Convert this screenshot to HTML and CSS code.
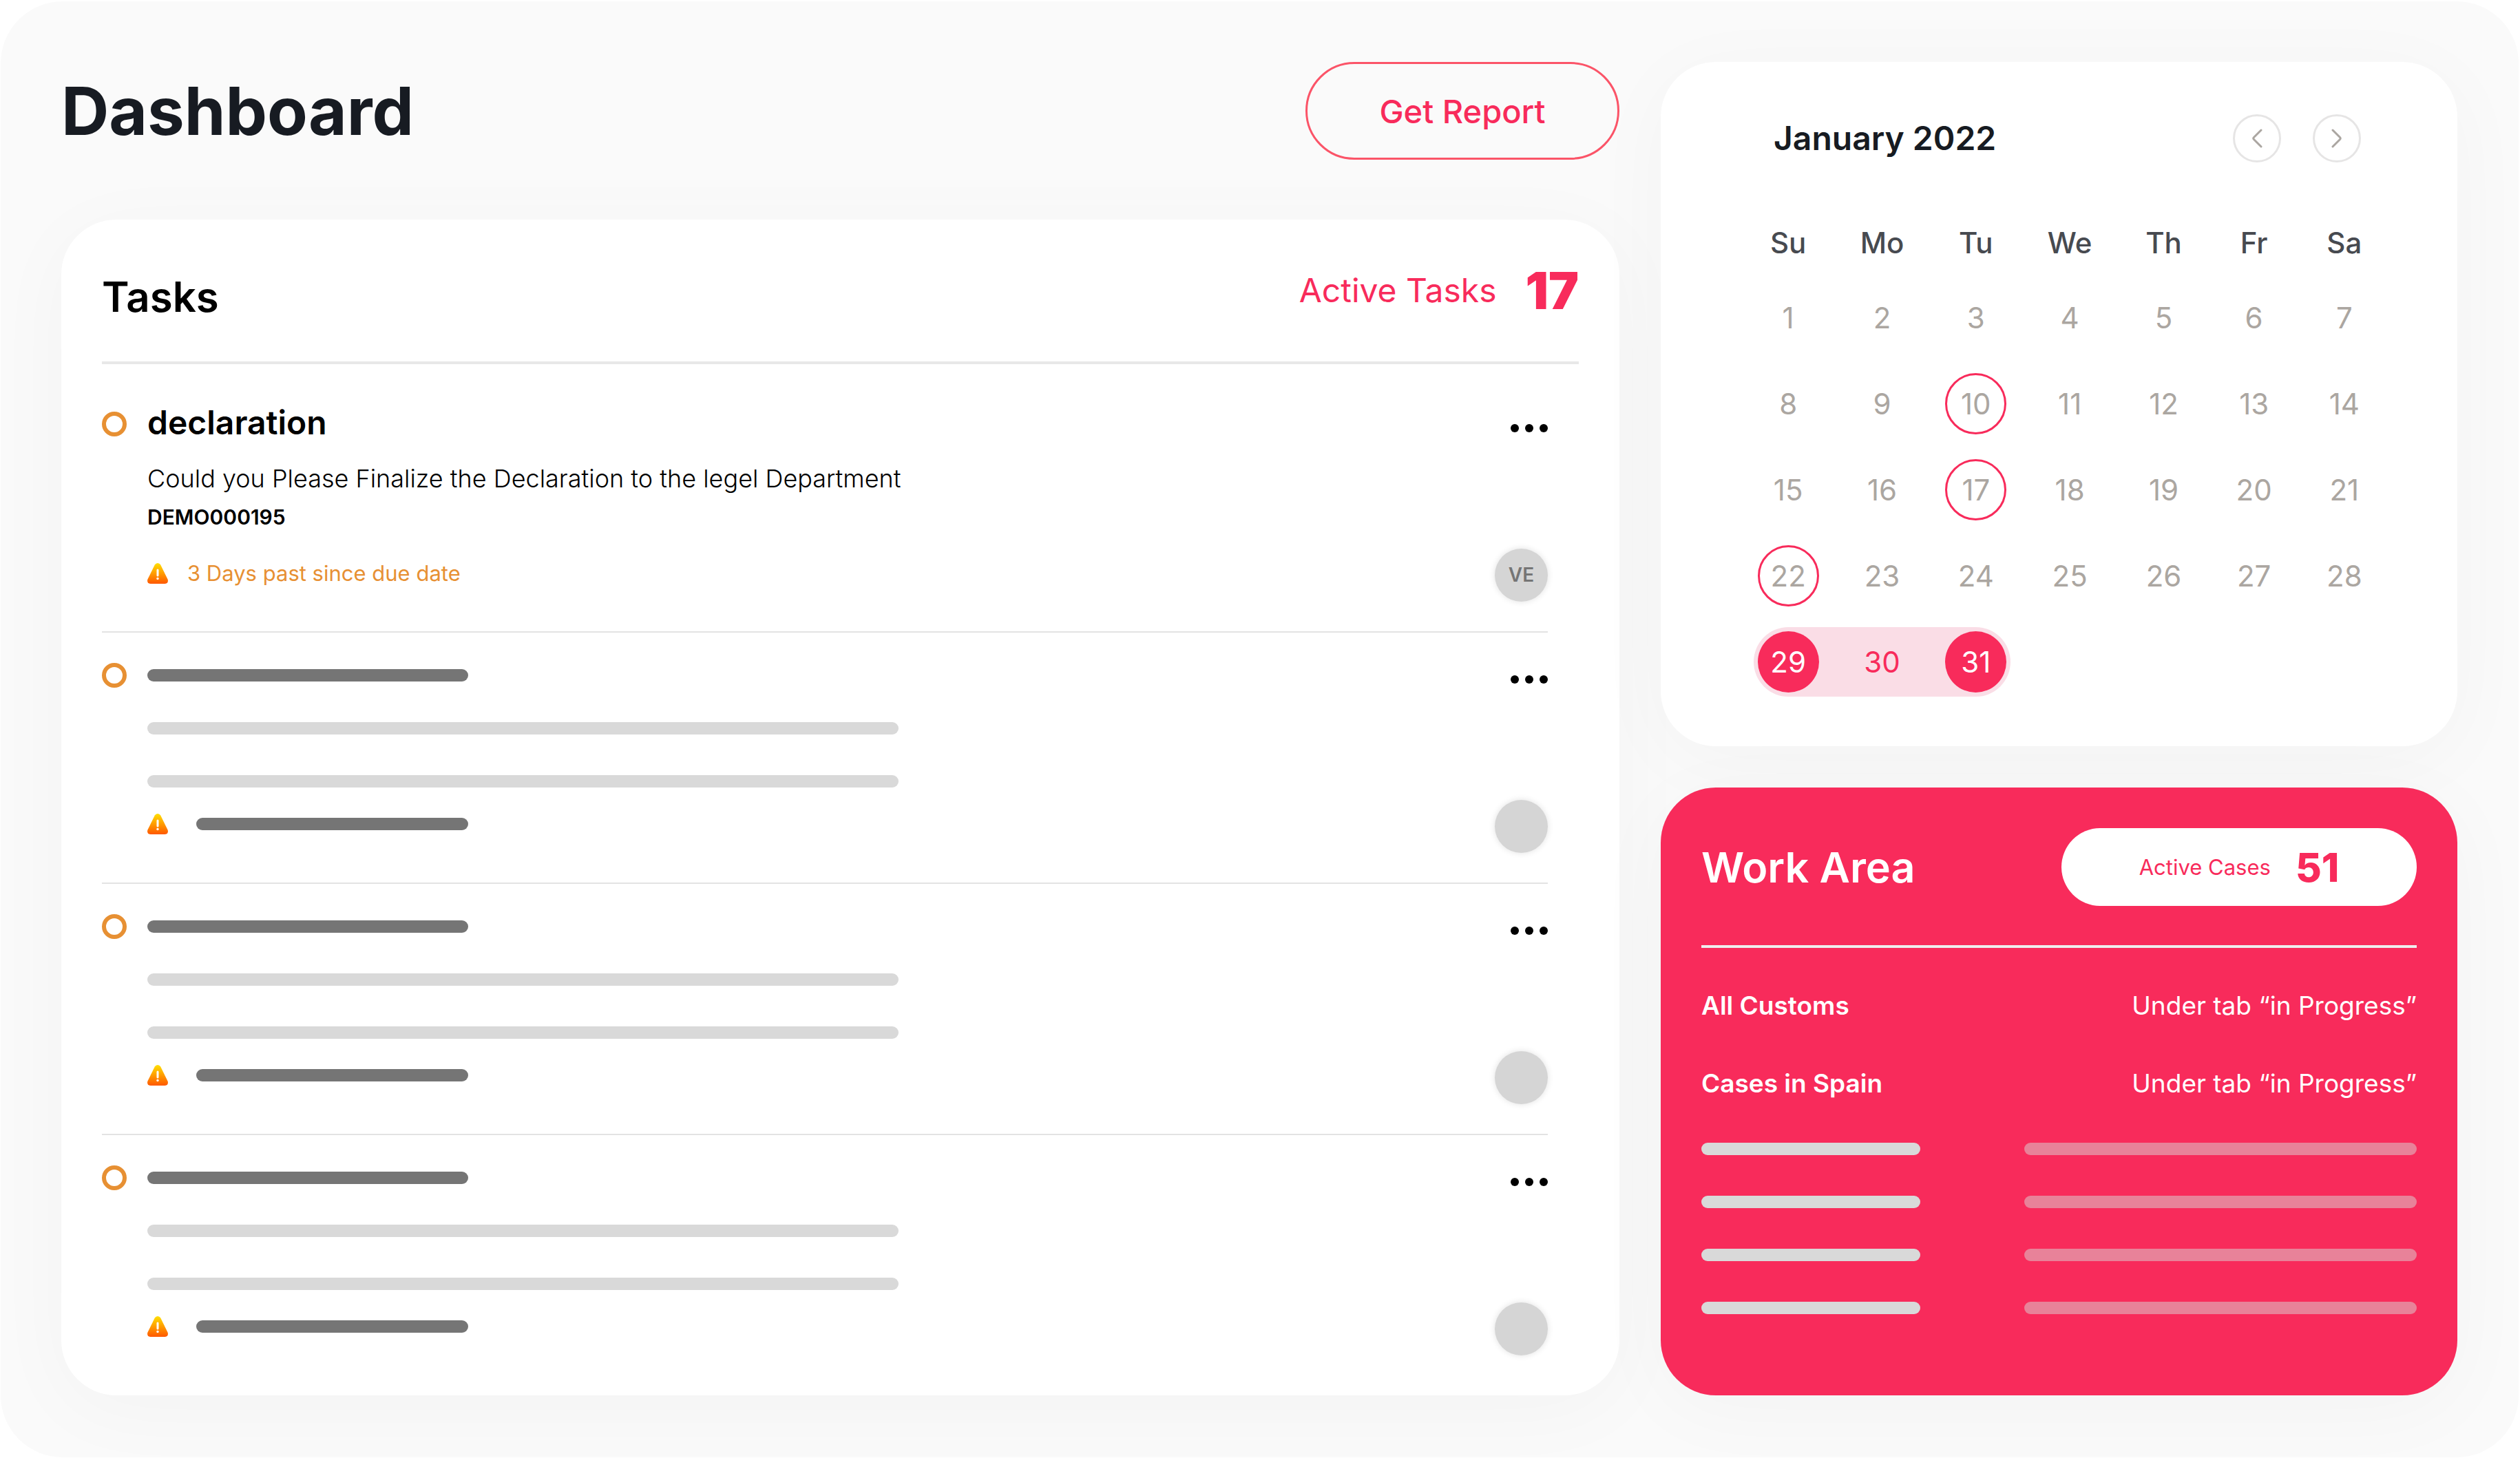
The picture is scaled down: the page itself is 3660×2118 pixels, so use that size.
FILE: index.html
```
<!DOCTYPE html>
<html lang="en">
<head>
  <meta charset="UTF-8">
  <title>Dashboard</title>
  <link rel="stylesheet" href="styles.css">
</head>
<body>
  <svg class="sprite" aria-hidden="true">
    <defs>
      <linearGradient id="warn-fill" x1="0" y1="0" x2="0" y2="1">
        <stop offset="0" stop-color="#ffe000"/>
        <stop offset="1" stop-color="#ff5800"/>
      </linearGradient>
      <symbol id="warn" viewBox="0 0 30 30">
        <path d="M10.800 2.600Q12.200 0 15 0Q17.800 0 19.200 2.600L29.400 23.200Q30.600 26 29.200 28.200Q28 30 25.500 30H4.500Q2 30 .8 28.200Q-.6 26 .6 23.200Z" fill="url(#warn-fill)"/>
        <path d="M15 10V18" stroke="#fff" stroke-width="3" stroke-linecap="round"/>
        <circle cx="15" cy="22.500" r="1.700" fill="#fff"/>
      </symbol>
      <symbol id="dots" viewBox="0 0 54 12">
        <circle cx="6" cy="6" r="6"/>
        <circle cx="27" cy="6" r="6"/>
        <circle cx="48" cy="6" r="6"/>
      </symbol>
    </defs>
  </svg>

  <div class="frame">
    <main class="left">
      <header class="top">
        <h1>Dashboard</h1>
        <button type="button" class="report">Get Report</button>
      </header>

      <section class="card tasks">
        <div class="tasks-head">
          <h2>Tasks</h2>
          <p class="active">Active Tasks <strong>17</strong></p>
        </div>

        <ul class="task-list">
          <li class="task">
            <input type="checkbox" class="ring" aria-label="declaration">
            <div class="task-body">
              <h3>declaration</h3>
              <p class="desc">Could you Please Finalize the Declaration to the legel Department</p>
              <p class="code">DEMO000195</p>
              <p class="due"><svg class="warn"><use href="#warn"/></svg>3 Days past since due date</p>
            </div>
            <div class="task-side">
              <button type="button" class="more" aria-label="More"><svg><use href="#dots"/></svg></button>
              <span class="avatar">VE</span>
            </div>
          </li>
          <li class="task">
            <input type="checkbox" class="ring" aria-label="Task 2">
            <div class="task-body">
              <div class="bar dark"></div>
              <div class="bar"></div>
              <div class="bar"></div>
              <div class="due-bar"><svg class="warn"><use href="#warn"/></svg><div class="bar dark short"></div></div>
            </div>
            <div class="task-side">
              <button type="button" class="more" aria-label="More"><svg><use href="#dots"/></svg></button>
              <span class="avatar"></span>
            </div>
          </li>
          <li class="task">
            <input type="checkbox" class="ring" aria-label="Task 3">
            <div class="task-body">
              <div class="bar dark"></div>
              <div class="bar"></div>
              <div class="bar"></div>
              <div class="due-bar"><svg class="warn"><use href="#warn"/></svg><div class="bar dark short"></div></div>
            </div>
            <div class="task-side">
              <button type="button" class="more" aria-label="More"><svg><use href="#dots"/></svg></button>
              <span class="avatar"></span>
            </div>
          </li>
          <li class="task">
            <input type="checkbox" class="ring" aria-label="Task 4">
            <div class="task-body">
              <div class="bar dark"></div>
              <div class="bar"></div>
              <div class="bar"></div>
              <div class="due-bar"><svg class="warn"><use href="#warn"/></svg><div class="bar dark short"></div></div>
            </div>
            <div class="task-side">
              <button type="button" class="more" aria-label="More"><svg><use href="#dots"/></svg></button>
              <span class="avatar"></span>
            </div>
          </li>
        </ul>
      </section>
    </main>

    <aside class="right">
      <section class="card calendar">
        <div class="cal-head">
          <h2>January 2022</h2>
          <div class="cal-nav">
            <button type="button" aria-label="Previous month"><svg viewBox="0 0 16 28"><path d="M14 2L3.500 12.500Q2 14 3.500 15.500L14 26"/></svg></button>
            <button type="button" aria-label="Next month"><svg viewBox="0 0 16 28"><path d="M2 2L12.500 12.500Q14 14 12.500 15.500L2 26"/></svg></button>
          </div>
        </div>
        <table>
          <colgroup><col><col><col><col><col><col class="fri"><col></colgroup>
          <thead>
            <tr><th>Su</th><th>Mo</th><th>Tu</th><th>We</th><th>Th</th><th>Fr</th><th>Sa</th></tr>
          </thead>
          <tbody>
            <tr><td>1</td><td>2</td><td>3</td><td>4</td><td>5</td><td>6</td><td>7</td></tr>
            <tr><td>8</td><td>9</td><td><span class="day marked">10</span></td><td>11</td><td>12</td><td>13</td><td>14</td></tr>
            <tr><td>15</td><td>16</td><td><span class="day marked">17</span></td><td>18</td><td>19</td><td>20</td><td>21</td></tr>
            <tr><td><span class="day marked">22</span></td><td>23</td><td>24</td><td>25</td><td>26</td><td>27</td><td>28</td></tr>
            <tr>
              <td class="range start"><span class="day picked">29</span></td>
              <td class="range"><span class="day">30</span></td>
              <td class="range end"><span class="day picked">31</span></td>
              <td></td><td></td><td></td><td></td>
            </tr>
          </tbody>
        </table>
      </section>

      <section class="card work">
        <div class="work-head">
          <h2>Work Area</h2>
          <p class="cases">Active Cases <strong>51</strong></p>
        </div>
        <div class="work-row"><b>All Customs</b><span>Under tab “in Progress”</span></div>
        <div class="work-row"><b>Cases in Spain</b><span>Under tab “in Progress”</span></div>
        <div class="work-bars">
          <div class="bar"></div><div class="bar pink"></div>
          <div class="bar"></div><div class="bar pink"></div>
          <div class="bar"></div><div class="bar pink"></div>
          <div class="bar"></div><div class="bar pink"></div>
        </div>
      </section>
    </aside>
  </div>
</body>
</html>
```
FILE: styles.css
```
* {
  box-sizing: border-box;
}
body {
  margin: 0;
  background: #fff;
  font-family: "Inter", sans-serif;
  color: #000;
}
h1, h2, h3, p, ul {
  margin: 0;
  padding: 0;
}
button {
  font-family: inherit;
  background: none;
  cursor: pointer;
}
.sprite {
  position: absolute;
  width: 0;
  height: 0;
}
.frame {
  display: grid;
  grid-template-columns: 2263fr 1157fr;
  gap: 60px;
  margin: 2px 2px 1px 1px;
  padding: 88px 89px 90px 88px;
  background: #fafafa;
  border-radius: 90px;
  overflow: hidden;
}
.left, .right {
  display: flex;
  flex-direction: column;
}
.right {
  gap: 60px;
}
.card {
  background: #fff;
  border-radius: 80px;
  box-shadow: 0 20px 120px rgba(0, 0, 0, 0.03);
}

/* header */
.top {
  display: flex;
  justify-content: space-between;
  align-items: center;
  margin-bottom: 87px;
}
h1 {
  font-size: 96px;
  font-weight: 700;
  line-height: 142px;
  color: #171b22;
}
.report {
  width: 456px;
  height: 142px;
  border: 3px solid #fb5468;
  border-radius: 71px;
  font-size: 47px;
  font-weight: 500;
  color: #f82b5b;
}

/* tasks */
.tasks {
  flex: 1;
  padding: 0 59px 15px;
}
.tasks-head {
  display: flex;
  justify-content: space-between;
  align-items: flex-end;
  padding: 58px 0;
  border-bottom: 4px solid #e8e8e8;
}
.tasks-head h2 {
  font-size: 60px;
  font-weight: 600;
  line-height: 72px;
}
.active {
  display: flex;
  align-items: center;
  gap: 42px;
  font-size: 48px;
  font-weight: 400;
  line-height: 90px;
  color: #f82b5b;
}
.active strong {
  font-size: 74px;
  font-weight: 900;
}
.task-list {
  list-style: none;
  margin-right: 45px;
}
.task {
  display: flex;
  gap: 30px;
  padding: 44px 0 43px;
  border-bottom: 2px solid #e3e3e3;
}
.task:first-child {
  padding-top: 69px;
}
.task:last-child {
  border-bottom: none;
}
.ring {
  appearance: none;
  width: 36px;
  height: 36px;
  margin: 0;
  border: 6px solid #e79033;
  border-radius: 50%;
}
.task-body {
  flex: 1;
}
.task h3 {
  margin-bottom: 43px;
  font-size: 48px;
  font-weight: 600;
  line-height: 32px;
}
.desc {
  margin-bottom: 14px;
  font-size: 36px;
  font-weight: 300;
  line-height: 44px;
}
.code {
  margin-bottom: 42px;
  font-size: 30px;
  font-weight: 600;
  line-height: 40px;
}
.due {
  display: flex;
  align-items: center;
  gap: 28px;
  font-size: 31px;
  line-height: 40px;
  color: #e79033;
}
.warn {
  width: 30px;
  height: 30px;
}
.task-side {
  display: flex;
  flex-direction: column;
  justify-content: space-between;
  align-items: flex-end;
  min-height: 276px;
  padding-top: 18px;
}
.more {
  display: flex;
  padding: 0;
  border: none;
}
.more svg {
  width: 54px;
  height: 12px;
}
.avatar {
  width: 77px;
  height: 77px;
  border-radius: 50%;
  background: #d5d5d5;
  box-shadow: 0 0 10px rgba(0, 0, 0, 0.12);
  font-size: 28px;
  font-weight: 600;
  line-height: 77px;
  text-align: center;
  color: #757575;
}

/* placeholder bars */
.bar {
  height: 18px;
  max-width: 1091px;
  border-radius: 9px;
  background: #d9d9d9;
}
.bar.dark {
  width: 466px;
  background: #757575;
}
.bar.short {
  width: 395px;
}
.bar.pink {
  background: #e88299;
}
.task-body > .bar {
  margin-bottom: 59px;
}
.task-body > .bar:first-child {
  margin-top: 9px;
}
.task-body > .bar:nth-child(3) {
  margin-bottom: 38px;
}
.due-bar {
  display: flex;
  align-items: center;
  gap: 41px;
}

/* calendar */
.calendar {
  padding: 76px 96px 60px 117px;
}
.cal-head {
  display: flex;
  justify-content: space-between;
  align-items: center;
  margin-bottom: 69px;
  padding: 0 44px 0 47px;
}
.cal-head h2 {
  font-size: 48px;
  font-weight: 600;
  line-height: 70px;
  color: #171b22;
}
.cal-nav {
  display: flex;
  gap: 46px;
}
.cal-nav button {
  display: flex;
  justify-content: center;
  align-items: center;
  width: 70px;
  height: 70px;
  padding: 0;
  border: 3px solid #e6e5e5;
  border-radius: 50%;
}
.cal-nav svg {
  width: 16px;
  height: 28px;
  fill: none;
  stroke: #aba6a1;
  stroke-width: 3;
  stroke-linecap: round;
}
table {
  width: 100%;
  table-layout: fixed;
  border-spacing: 0;
  font-size: 42px;
  text-align: center;
}
.fri {
  width: 126px;
}
th {
  height: 94px;
  padding: 0;
  font-weight: 500;
  color: #474a50;
}
td {
  position: relative;
  height: 125px;
  padding: 0;
  color: #aba6a1;
}
.day {
  position: relative;
  display: block;
  width: 89px;
  height: 89px;
  margin: 0 auto;
  border-radius: 50%;
  line-height: 89px;
}
.marked {
  border: 3px solid #f82b5b;
  line-height: 83px;
}
.range {
  color: #f82b5b;
}
.range::before {
  content: "";
  position: absolute;
  inset: 12px 0;
  background: #fadde6;
}
.range.start::before {
  left: 18px;
  border-radius: 51px 0 0 51px;
}
.range.end::before {
  right: 18px;
  border-radius: 0 51px 51px 0;
}
.picked {
  background: #f82b5b;
  color: #fff;
}

/* work area */
.work {
  padding: 59px 59px 118px;
  background: #f82b5b;
  color: #fff;
}
.work-head {
  display: flex;
  justify-content: space-between;
  align-items: center;
  margin-bottom: 57px;
  padding-bottom: 57px;
  border-bottom: 4px solid #eee;
}
.work-head h2 {
  font-size: 61px;
  font-weight: 600;
}
.cases {
  display: flex;
  justify-content: center;
  align-items: center;
  gap: 36px;
  width: 516px;
  height: 113px;
  border-radius: 57px;
  background: #fff;
  font-size: 31px;
  color: #f82b5b;
}
.cases strong {
  font-size: 58px;
  font-weight: 800;
}
.work-row {
  display: flex;
  justify-content: space-between;
  margin-bottom: 59px;
  font-size: 37px;
  line-height: 54px;
}
.work-row b {
  font-weight: 600;
}
.work-bars {
  display: grid;
  grid-template-columns: 318fr 570fr;
  gap: 59px 151px;
}
```
